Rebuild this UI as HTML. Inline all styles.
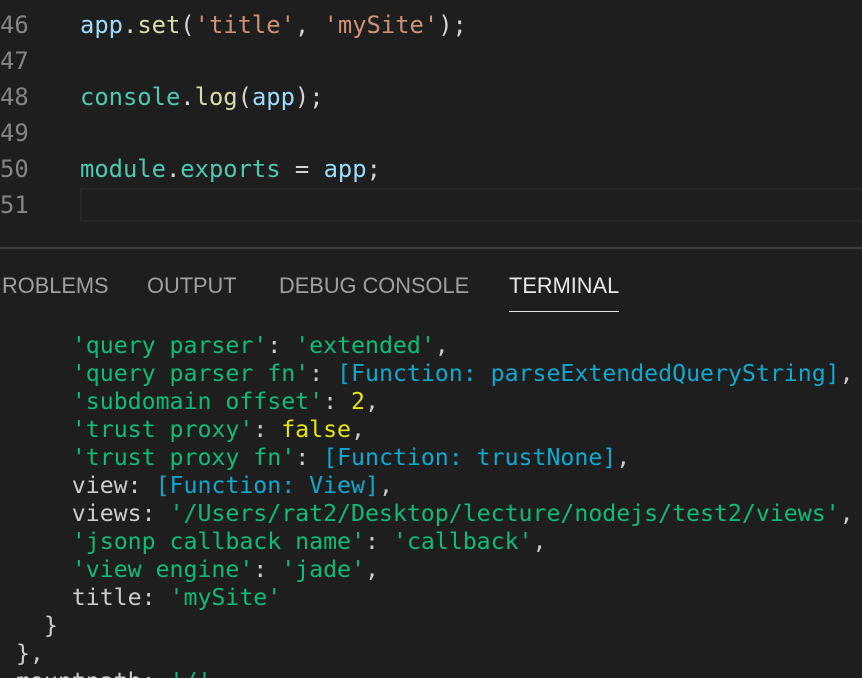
<!DOCTYPE html>
<html style="overflow:hidden;height:678px"><head><style>
body{margin:0;width:862px;height:678px;background:#1e1e1e;overflow:hidden;position:relative}
.ed{position:absolute;left:0;top:0;font-family:"DejaVu Sans Mono","Liberation Mono",monospace;font-size:23.8px;white-space:pre}
.ln{position:absolute;left:0;height:36px;line-height:36px;color:#858585}
.cd{position:absolute;left:80px;height:36px;line-height:36px;color:#d4d4d4}
.v{color:#9cdcfe}.f{color:#dcdcaa}.s{color:#ce9178}.t{color:#4ec9b0}
.cur{position:absolute;left:80px;top:188px;width:800px;height:30px;border:2px solid #282828}
.sep{position:absolute;left:0;top:247px;width:862px;height:2px;background:#3c3c3c}
.tab{position:absolute;top:272px;font-family:"Liberation Sans",sans-serif;font-size:21.8px;color:#a0a0a0;line-height:28px}
.ul{position:absolute;left:509px;top:311px;width:110px;height:1px;background:#e7e7e7}
.term{position:absolute;left:2px;top:332px;font-family:"DejaVu Sans Mono","Liberation Mono",monospace;font-size:23.2px;white-space:pre;color:#cccccc;line-height:28px}
.g{color:#0dbc79}.b{color:#11a8cd}.y{color:#e5e510}
</style></head><body>
<div class="ed">
<div class="ln" style="top:7px">46</div><div class="cd" style="top:7px"><span class="v">app</span>.<span class="f">set</span>(<span class="s">'title'</span>, <span class="s">'mySite'</span>);</div>
<div class="ln" style="top:43px">47</div>
<div class="ln" style="top:79px">48</div><div class="cd" style="top:79px"><span class="t">console</span>.<span class="f">log</span>(<span class="v">app</span>);</div>
<div class="ln" style="top:115px">49</div>
<div class="ln" style="top:151px">50</div><div class="cd" style="top:151px"><span class="t">module</span>.<span class="t">exports</span> = <span class="v">app</span>;</div>
<div class="ln" style="top:187px">51</div>
</div>
<div class="cur"></div>
<div class="sep"></div>
<div class="tab" style="left:2px">ROBLEMS</div>
<div class="tab" style="left:147px">OUTPUT</div>
<div class="tab" style="left:279px">DEBUG CONSOLE</div>
<div class="tab" style="left:509px;color:#e7e7e7">TERMINAL</div>
<div class="ul"></div>
<div class="term">     <span class="g">'query parser'</span>: <span class="g">'extended'</span>,
     <span class="g">'query parser fn'</span>: <span class="b">[Function: parseExtendedQueryString]</span>,
     <span class="g">'subdomain offset'</span>: <span class="y">2</span>,
     <span class="g">'trust proxy'</span>: <span class="y">false</span>,
     <span class="g">'trust proxy fn'</span>: <span class="b">[Function: trustNone]</span>,
     view: <span class="b">[Function: View]</span>,
     views: <span class="g">'/Users/rat2/Desktop/lecture/nodejs/test2/views'</span>,
     <span class="g">'jsonp callback name'</span>: <span class="g">'callback'</span>,
     <span class="g">'view engine'</span>: <span class="g">'jade'</span>,
     title: <span class="g">'mySite'</span>
   }
 },
 mountpath: <span class="g">'/'</span>,</div>
</body></html>
